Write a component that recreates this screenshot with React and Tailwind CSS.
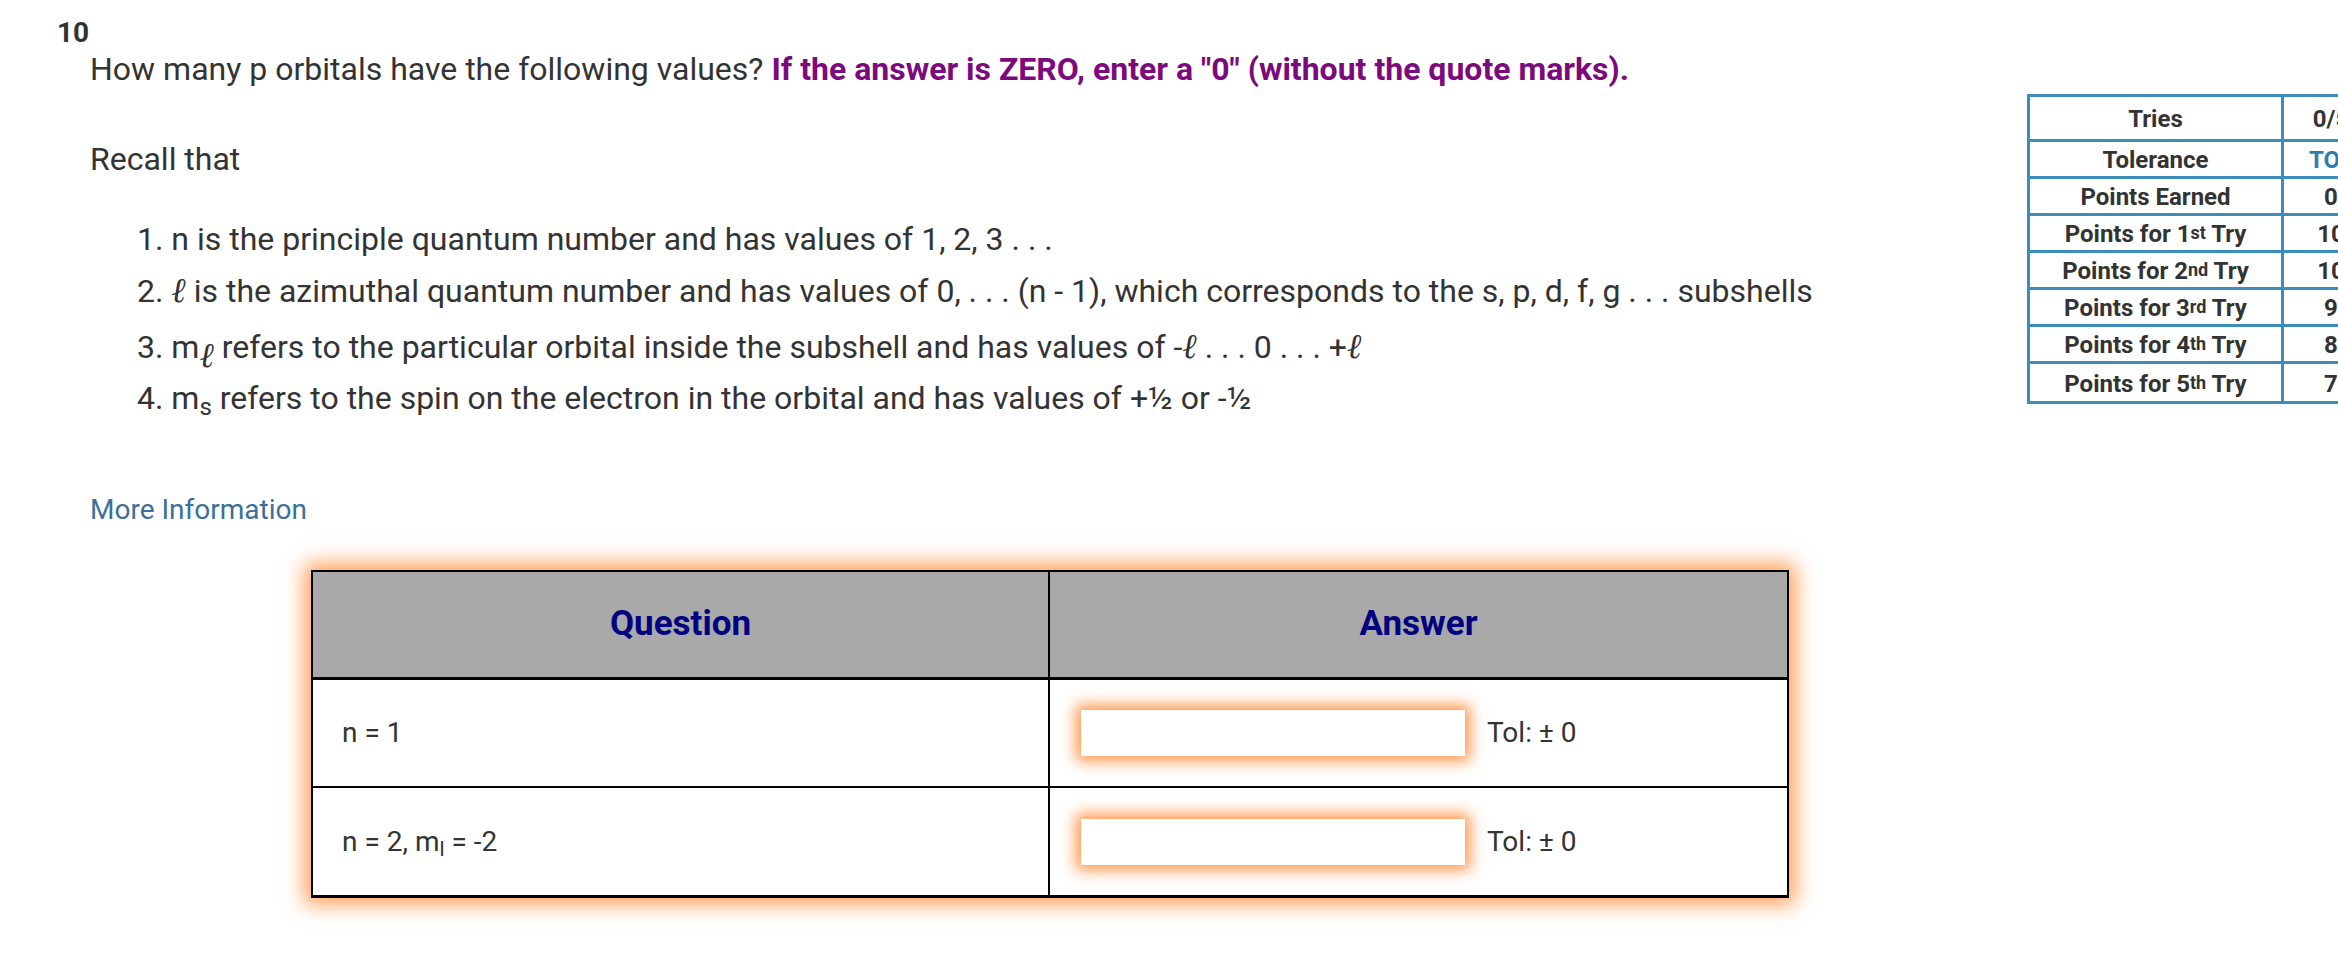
import React from "react";

const ellFont = "font-['Liberation_Serif','DejaVu_Serif',serif] italic text-[1.08em]";
const ell = ellFont + " leading-none";

function ScoreTable() {
  const rows = [
    { label: "Tries", value: "0/5", tall: true },
    { label: "Tolerance", value: "TOL", link: true },
    { label: "Points Earned", value: "0" },
    { label: "Points for 1", sup: "st", value: "10" },
    { label: "Points for 2", sup: "nd", value: "10" },
    { label: "Points for 3", sup: "rd", value: "9" },
    { label: "Points for 4", sup: "th", value: "8" },
    { label: "Points for 5", sup: "th", value: "7" },
  ];
  return (
    <div className="w-[354px] border-[3px] border-[#3d8dba] text-[24px] font-bold text-[#333]">
      {rows.map((r, i) => (
        <div
          key={r.label + i}
          className={
            "flex " +
            (r.tall ? "h-[45px] " : "h-[37px] ") +
            (i < rows.length - 1 ? "border-b-[3px] border-[#3d8dba]" : "")
          }
        >
          <div className="w-[254px] shrink-0 border-r-[3px] border-[#3d8dba] flex items-center justify-center leading-none pt-[2px]">
            <span>
              {r.label}
              {r.sup && <sup className="text-[18px] relative -top-[3px]">{r.sup}</sup>}
              {r.sup && " Try"}
            </span>
          </div>
          <div className={"w-[94px] shrink-0 flex items-center justify-center pt-[2px] " + (r.link ? "text-[#2f7db3]" : "")}>
            {r.value}
          </div>
        </div>
      ))}
    </div>
  );
}

function AnswerCell() {
  return (
    <div className="flex items-center pl-[31px]">
      <input
        type="text"
        className="w-[384px] h-[46px] bg-white border-0 outline-none shadow-[0_0_14px_5px_rgba(255,130,40,0.85)]"
      />
      <span className="ml-[22px]">Tol: ± 0</span>
    </div>
  );
}

export default function App() {
  return (
    <div className="w-[2338px] h-[955px] overflow-hidden bg-white text-[#333] font-['Roboto','Liberation_Sans',sans-serif]">
      <div className="pl-[57px] pt-[18px] text-[28px] leading-[30px] font-bold">10</div>
      <div className="flex">
        <div className="w-[2027px] shrink-0 pl-[90px]">
          <p className="mt-[1px] text-[32px] leading-[40px]">
            How many p orbitals have the following values?{" "}
            <strong className="font-bold text-[#7d0a7d]">If the answer is ZERO, enter a "0" (without the quote marks).</strong>
          </p>
          <p className="mt-[50px] text-[32px] leading-[40px]">Recall that</p>
          <ol className="mt-[34px] ml-[47px] list-decimal list-inside text-[32px] leading-[52px]">
            <li className="h-[52px]">n is the principle quantum number and has values of 1, 2, 3 . . .</li>
            <li className="h-[56px]">
              <span className={ell}>ℓ</span> is the azimuthal quantum number and has values of 0, . . . (n - 1), which corresponds to the s, p, d, f, g . . . subshells
            </li>
            <li className="h-[51px]">
              m<sub className={ellFont}>ℓ</sub> refers to the particular orbital inside the subshell and has values of -<span className={ell}>ℓ</span> . . . 0 . . . +<span className={ell}>ℓ</span>
            </li>
            <li className="h-[52px]">
              m<sub>s</sub> refers to the spin on the electron in the orbital and has values of +½ or -½
            </li>
          </ol>
          <a href="#" className="block mt-[66px] text-[28px] leading-[40px] text-[#3b7099]">More Information</a>

          <div className="mt-[40px] ml-[221px] w-[1478px] border-2 border-b-[3px] border-black text-[28px] shadow-[0_0_20px_6px_rgba(255,130,40,0.8)]">
            <div className="grid grid-cols-2 h-[108px] bg-[#a9a9a9] border-b-[3px] border-black text-[35px] font-bold text-[#000080]">
              <div className="border-r-2 border-black flex items-center justify-center">Question</div>
              <div className="flex items-center justify-center">Answer</div>
            </div>
            <div className="grid grid-cols-2 h-[108px] border-b-2 border-black bg-white">
              <div className="border-r-2 border-black flex items-center pl-[29px]">n = 1</div>
              <AnswerCell />
            </div>
            <div className="grid grid-cols-2 h-[107px] bg-white">
              <div className="border-r-2 border-black flex items-center pl-[29px]">
                <span>n = 2, m<sub>l</sub> = -2</span>
              </div>
              <AnswerCell />
            </div>
          </div>
        </div>
        <div className="shrink-0 mt-[46px]">
          <ScoreTable />
        </div>
      </div>
    </div>
  );
}
